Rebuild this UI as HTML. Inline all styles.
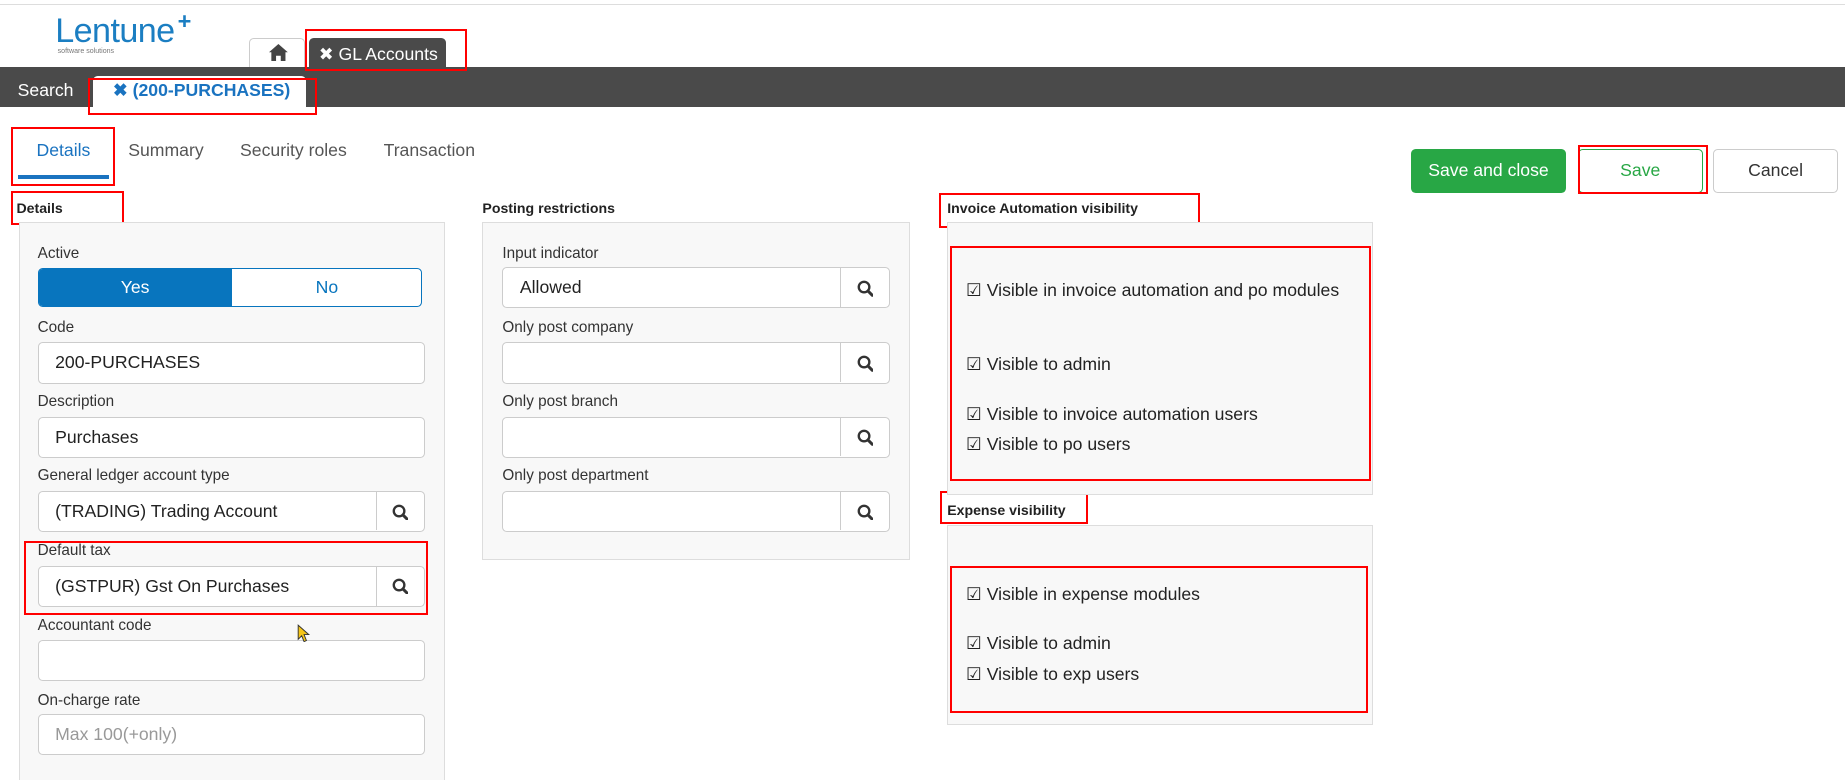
<!DOCTYPE html>
<html><head><meta charset="utf-8"><style>
*{box-sizing:border-box;margin:0;padding:0}
html,body{width:1845px;height:780px;overflow:hidden;background:#fff;font-family:"Liberation Sans",Arial,sans-serif}
#w{position:absolute;left:0;top:0;width:1568px;height:663px;zoom:1.17666;overflow:hidden}
.a{position:absolute}
.red{position:absolute;border:2px solid #f00}
.lbl{position:absolute;font-size:13px;color:#333}
.inp{position:absolute;background:#fff;border:1px solid #ccc;border-radius:4px;height:35px;font-size:15px;color:#222;padding-left:14px;line-height:33px}
.btn{position:absolute;right:0;top:0;width:41px;height:33px;border-left:1px solid #ccc}
.h{position:absolute;font-size:12px;font-weight:bold;color:#222}
.panel{position:absolute;background:#f8f8f8;border:1px solid #ddd}
.chk{position:absolute;font-size:15px;color:#222;white-space:nowrap}
.tab{position:absolute;font-size:15px;color:#555}
</style></head><body><div id="w">
<div class="a" style="left:0;top:3px;width:1568px;height:1px;background:#ddd"></div>
<div class="a" style="left:47px;top:10px;font-size:29px;color:#1b7ec2;letter-spacing:-0.5px">Lentune</div>
<div class="a" style="left:151px;top:7px;font-size:20px;font-weight:bold;color:#1b7ec2">+</div>
<div class="a" style="left:49px;top:41px;font-size:6px;color:#777">software solutions</div>
<div class="a" style="left:212px;top:32px;width:47px;height:26px;border:1px solid #ccc;border-bottom:none;border-radius:4px 4px 0 0;background:#fff"></div>
<svg class="a" style="left:229px;top:37px" width="16" height="15" viewBox="0 0 16 15"><path d="M8 0L0 7h2v8h4v-5h4v5h4V7h2z" fill="#444"/></svg>
<div class="a" style="left:263px;top:32px;width:116px;height:26px;background:#4a4a4a;border-radius:4px 4px 0 0;color:#fff;font-size:15px;padding:5px 0 0 8px">✖ GL Accounts</div>
<div class="a" style="left:0;top:57px;width:1568px;height:34px;background:#4a4a4a"></div>
<div class="a" style="left:15px;top:68px;color:#fff;font-size:15px">Search</div>
<div class="a" style="left:79px;top:65px;width:181px;height:26px;background:#fff;border-radius:4px 4px 0 0;color:#1a73c0;font-weight:bold;font-size:15px;padding:3px 0 0 17px">✖ (200-PURCHASES)</div>
<div class="red" style="left:259px;top:25px;width:138px;height:35px"></div>
<div class="red" style="left:75px;top:66px;width:194px;height:32px"></div>

<div class="tab" style="left:31px;top:119px;color:#1a73c0">Details</div>
<div class="a" style="left:15px;top:149px;width:78px;height:3px;background:#1a73c0"></div>
<div class="tab" style="left:109px;top:119px">Summary</div>
<div class="tab" style="left:204px;top:119px">Security roles</div>
<div class="tab" style="left:326px;top:119px">Transaction</div>
<div class="red" style="left:9px;top:108px;width:89px;height:50px"></div>

<div class="a" style="left:1199px;top:127px;width:132px;height:37px;background:#28a745;border-radius:4px;color:#fff;font-size:15px;text-align:center;line-height:37px">Save and close</div>
<div class="a" style="left:1341px;top:127px;width:106px;height:37px;background:#fff;border:1px solid #28a745;border-radius:4px;color:#28a745;font-size:15px;text-align:center;line-height:35px">Save</div>
<div class="a" style="left:1456px;top:127px;width:106px;height:37px;background:#fff;border:1px solid #ccc;border-radius:4px;color:#333;font-size:15px;text-align:center;line-height:35px">Cancel</div>
<div class="red" style="left:1341px;top:123px;width:111px;height:42px"></div>

<div class="h" style="left:14px;top:170px">Details</div>
<div class="red" style="left:9px;top:162px;width:96px;height:29px"></div>
<div class="h" style="left:410px;top:170px">Posting restrictions</div>
<div class="h" style="left:805px;top:170px">Invoice Automation visibility</div>
<div class="red" style="left:798px;top:164px;width:222px;height:30px"></div>
<div class="h" style="left:805px;top:427px">Expense visibility</div>
<div class="red" style="left:799px;top:417px;width:126px;height:28px"></div>

<div class="panel" style="left:16px;top:189px;width:362px;height:480px"></div>
<div class="lbl" style="left:32px;top:208px">Active</div>
<div class="a" style="left:32px;top:228px;width:327px;height:33px;border:1px solid #0875be;border-radius:4px;background:#fff;overflow:hidden">
<div class="a" style="left:0;top:0;width:164px;height:31px;background:#0875be;color:#fff;font-size:15px;text-align:center;line-height:31px">Yes</div>
<div class="a" style="left:164px;top:0;width:162px;height:31px;color:#0875be;font-size:15px;text-align:center;line-height:31px">No</div></div>
<div class="lbl" style="left:32px;top:271px">Code</div>
<div class="inp" style="left:32px;top:291px;width:329px">200-PURCHASES</div>
<div class="lbl" style="left:32px;top:334px">Description</div>
<div class="inp" style="left:32px;top:354px;width:329px">Purchases</div>
<div class="lbl" style="left:32px;top:397px">General ledger account type</div>
<div class="inp" style="left:32px;top:417px;width:329px">(TRADING) Trading Account<div class="btn"></div></div>
<div class="lbl" style="left:32px;top:461px">Default tax</div>
<div class="inp" style="left:32px;top:481px;width:329px">(GSTPUR) Gst On Purchases<div class="btn"></div></div>
<div class="red" style="left:20px;top:460px;width:344px;height:63px"></div>
<div class="lbl" style="left:32px;top:524px">Accountant code</div>
<div class="inp" style="left:32px;top:544px;width:329px"></div>
<div class="lbl" style="left:32px;top:588px">On-charge rate</div>
<div class="inp" style="left:32px;top:607px;width:329px;color:#999">Max 100(+only)</div>

<div class="panel" style="left:410px;top:189px;width:363px;height:287px"></div>
<div class="lbl" style="left:427px;top:208px">Input indicator</div>
<div class="inp" style="left:427px;top:227px;width:329px">Allowed<div class="btn"></div></div>
<div class="lbl" style="left:427px;top:271px">Only post company</div>
<div class="inp" style="left:427px;top:291px;width:329px"><div class="btn"></div></div>
<div class="lbl" style="left:427px;top:334px">Only post branch</div>
<div class="inp" style="left:427px;top:354px;width:329px"><div class="btn"></div></div>
<div class="lbl" style="left:427px;top:397px">Only post department</div>
<div class="inp" style="left:427px;top:417px;width:329px"><div class="btn"></div></div>

<div class="panel" style="left:805px;top:189px;width:362px;height:232px"></div>
<div class="chk" style="left:821px;top:238px">☑ Visible in invoice automation and po modules</div>
<div class="chk" style="left:821px;top:301px">☑ Visible to admin</div>
<div class="chk" style="left:821px;top:343px">☑ Visible to invoice automation users</div>
<div class="chk" style="left:821px;top:369px">☑ Visible to po users</div>
<div class="red" style="left:807px;top:209px;width:358px;height:200px"></div>

<div class="panel" style="left:805px;top:446px;width:362px;height:170px"></div>
<div class="chk" style="left:821px;top:496px">☑ Visible in expense modules</div>
<div class="chk" style="left:821px;top:538px">☑ Visible to admin</div>
<div class="chk" style="left:821px;top:564px">☑ Visible to exp users</div>
<div class="red" style="left:807px;top:481px;width:356px;height:125px"></div>

<svg width="0" height="0" style="position:absolute"><defs><g id="mg"><circle cx="6" cy="6" r="4.5" fill="none" stroke="#333" stroke-width="2"/><path d="M9.3 9.3L13 13" stroke="#333" stroke-width="2.5" stroke-linecap="round"/></g></defs></svg>
<svg class="a" style="left:333px;top:428px" width="14" height="14"><use href="#mg"/></svg>
<svg class="a" style="left:333px;top:491px" width="14" height="14"><use href="#mg"/></svg>
<svg class="a" style="left:728px;top:238px" width="14" height="14"><use href="#mg"/></svg>
<svg class="a" style="left:728px;top:302px" width="14" height="14"><use href="#mg"/></svg>
<svg class="a" style="left:728px;top:365px" width="14" height="14"><use href="#mg"/></svg>
<svg class="a" style="left:728px;top:428px" width="14" height="14"><use href="#mg"/></svg>
<svg class="a" style="left:252px;top:530px" width="12" height="16"><path d="M1 1v12l3-3 2 5 2-1-2-5h4z" fill="#f5c518" stroke="#333" stroke-width="0.8"/></svg>
</div></body></html>
